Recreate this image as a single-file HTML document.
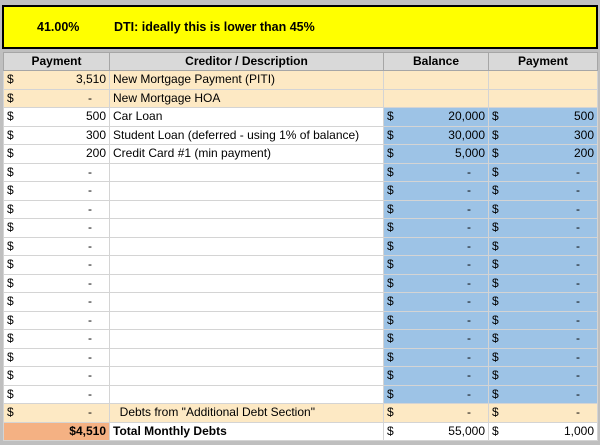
<!DOCTYPE html>
<html><head><style>
body{margin:0;width:600px;height:445px;background:#bfbfbf;font-family:"Liberation Sans",sans-serif;font-size:12px;color:#000;overflow:hidden;position:relative}
.ban{position:absolute;left:2px;top:5px;width:592px;height:40px;background:#ffff00;border:2px solid #000;font-weight:bold;font-size:12.5px}
.ban span{position:absolute;top:13px}
table{position:absolute;left:3px;top:52px;border-collapse:collapse;table-layout:fixed;background:#fff}
td{height:17.5px;padding:0 3px;border:1px solid #d4d4d4;white-space:nowrap;overflow:hidden;line-height:17px}
tr.h td{background:#d9d9d9;font-weight:bold;text-align:center;height:17px;border-color:#a6a6a6}
.t td{background:#fde9c4}
.b{background:#9dc3e6}
.r{text-align:right}
.d{float:left}
.bl{border-left:1.5px solid #5a6a7a}
tr.tot td{border-top:1.5px solid #666}
tr.sep td{border-top:1.5px solid #666}
</style></head><body>
<div class="ban"><span style="left:33px">41.00%</span><span style="left:110px">DTI: ideally this is lower than 45%</span></div>
<table>
<colgroup><col style="width:106px"><col style="width:274px"><col style="width:105px"><col style="width:109px"></colgroup>
<tr class="h"><td>Payment</td><td>Creditor / Description</td><td>Balance</td><td>Payment</td></tr>
<tr class="t"><td class="r"><span class="d">$</span>3,510</td><td>New Mortgage Payment (PITI)</td><td></td><td></td></tr>
<tr class="t"><td class="r"><span class="d">$</span><span style="padding-right:14px">-</span></td><td>New Mortgage HOA</td><td></td><td></td></tr>
<tr class="sep"><td class="r"><span class="d">$</span>500</td><td>Car Loan</td><td class="b r bl"><span class="d">$</span>20,000</td><td class="b r bl"><span class="d">$</span>500</td></tr>
<tr><td class="r"><span class="d">$</span>300</td><td>Student Loan (deferred - using 1% of balance)</td><td class="b r bl"><span class="d">$</span>30,000</td><td class="b r bl"><span class="d">$</span>300</td></tr>
<tr><td class="r"><span class="d">$</span>200</td><td>Credit Card #1 (min payment)</td><td class="b r bl"><span class="d">$</span>5,000</td><td class="b r bl"><span class="d">$</span>200</td></tr>
<tr><td class="r"><span class="d">$</span><span style="padding-right:14px">-</span></td><td></td><td class="b r bl"><span class="d">$</span><span style="padding-right:14px">-</span></td><td class="b r bl"><span class="d">$</span><span style="padding-right:14px">-</span></td></tr>
<tr><td class="r"><span class="d">$</span><span style="padding-right:14px">-</span></td><td></td><td class="b r bl"><span class="d">$</span><span style="padding-right:14px">-</span></td><td class="b r bl"><span class="d">$</span><span style="padding-right:14px">-</span></td></tr>
<tr><td class="r"><span class="d">$</span><span style="padding-right:14px">-</span></td><td></td><td class="b r bl"><span class="d">$</span><span style="padding-right:14px">-</span></td><td class="b r bl"><span class="d">$</span><span style="padding-right:14px">-</span></td></tr>
<tr><td class="r"><span class="d">$</span><span style="padding-right:14px">-</span></td><td></td><td class="b r bl"><span class="d">$</span><span style="padding-right:14px">-</span></td><td class="b r bl"><span class="d">$</span><span style="padding-right:14px">-</span></td></tr>
<tr><td class="r"><span class="d">$</span><span style="padding-right:14px">-</span></td><td></td><td class="b r bl"><span class="d">$</span><span style="padding-right:14px">-</span></td><td class="b r bl"><span class="d">$</span><span style="padding-right:14px">-</span></td></tr>
<tr><td class="r"><span class="d">$</span><span style="padding-right:14px">-</span></td><td></td><td class="b r bl"><span class="d">$</span><span style="padding-right:14px">-</span></td><td class="b r bl"><span class="d">$</span><span style="padding-right:14px">-</span></td></tr>
<tr><td class="r"><span class="d">$</span><span style="padding-right:14px">-</span></td><td></td><td class="b r bl"><span class="d">$</span><span style="padding-right:14px">-</span></td><td class="b r bl"><span class="d">$</span><span style="padding-right:14px">-</span></td></tr>
<tr><td class="r"><span class="d">$</span><span style="padding-right:14px">-</span></td><td></td><td class="b r bl"><span class="d">$</span><span style="padding-right:14px">-</span></td><td class="b r bl"><span class="d">$</span><span style="padding-right:14px">-</span></td></tr>
<tr><td class="r"><span class="d">$</span><span style="padding-right:14px">-</span></td><td></td><td class="b r bl"><span class="d">$</span><span style="padding-right:14px">-</span></td><td class="b r bl"><span class="d">$</span><span style="padding-right:14px">-</span></td></tr>
<tr><td class="r"><span class="d">$</span><span style="padding-right:14px">-</span></td><td></td><td class="b r bl"><span class="d">$</span><span style="padding-right:14px">-</span></td><td class="b r bl"><span class="d">$</span><span style="padding-right:14px">-</span></td></tr>
<tr><td class="r"><span class="d">$</span><span style="padding-right:14px">-</span></td><td></td><td class="b r bl"><span class="d">$</span><span style="padding-right:14px">-</span></td><td class="b r bl"><span class="d">$</span><span style="padding-right:14px">-</span></td></tr>
<tr><td class="r"><span class="d">$</span><span style="padding-right:14px">-</span></td><td></td><td class="b r bl"><span class="d">$</span><span style="padding-right:14px">-</span></td><td class="b r bl"><span class="d">$</span><span style="padding-right:14px">-</span></td></tr>
<tr><td class="r"><span class="d">$</span><span style="padding-right:14px">-</span></td><td></td><td class="b r bl"><span class="d">$</span><span style="padding-right:14px">-</span></td><td class="b r bl"><span class="d">$</span><span style="padding-right:14px">-</span></td></tr>
<tr class="t sep"><td class="r"><span class="d">$</span><span style="padding-right:14px">-</span></td><td>&nbsp;&nbsp;Debts from "Additional Debt Section"</td><td class="r"><span class="d">$</span><span style="padding-right:14px">-</span></td><td class="r"><span class="d">$</span><span style="padding-right:14px">-</span></td></tr>
<tr class="tot"><td class="r" style="background:#f4b183;font-weight:bold">$4,510</td><td style="font-weight:bold">Total Monthly Debts</td><td class="r"><span class="d">$</span>55,000</td><td class="r"><span class="d">$</span>1,000</td></tr>
</table>
</body></html>
